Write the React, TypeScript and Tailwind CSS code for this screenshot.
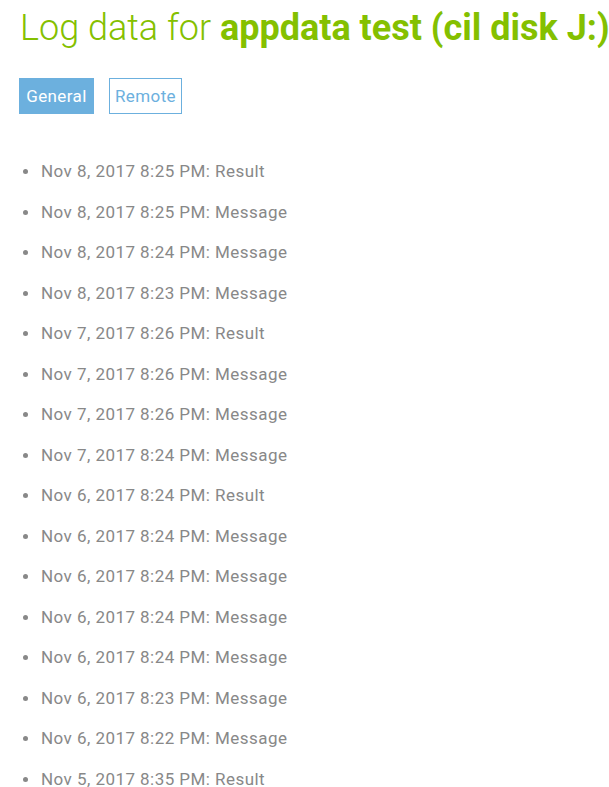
const entries: [string, string][] = [
  ["Nov 8, 2017 8:25 PM", "Result"],
  ["Nov 8, 2017 8:25 PM", "Message"],
  ["Nov 8, 2017 8:24 PM", "Message"],
  ["Nov 8, 2017 8:23 PM", "Message"],
  ["Nov 7, 2017 8:26 PM", "Result"],
  ["Nov 7, 2017 8:26 PM", "Message"],
  ["Nov 7, 2017 8:26 PM", "Message"],
  ["Nov 7, 2017 8:24 PM", "Message"],
  ["Nov 6, 2017 8:24 PM", "Result"],
  ["Nov 6, 2017 8:24 PM", "Message"],
  ["Nov 6, 2017 8:24 PM", "Message"],
  ["Nov 6, 2017 8:24 PM", "Message"],
  ["Nov 6, 2017 8:24 PM", "Message"],
  ["Nov 6, 2017 8:23 PM", "Message"],
  ["Nov 6, 2017 8:22 PM", "Message"],
  ["Nov 5, 2017 8:35 PM", "Result"],
];

export default function App() {
  return (
    <div className="min-h-screen overflow-hidden bg-white pl-[20px] font-['Roboto',sans-serif]">
      <h1 className="whitespace-nowrap pt-[6px] text-[36px] leading-[44px] text-[#84c000]">
        <span className="font-light">Log data for </span>
        <span className="font-bold">appdata test (cil disk J:)</span>
      </h1>

      <div className="mt-[28px] flex gap-[15px]">
        <button className="-ml-[1px] h-[36px] w-[75px] bg-[#6cb0de] pt-[1px] text-[17px] tracking-[0.4px] text-white">
          General
        </button>
        <button className="h-[36px] w-[73px] border border-[#6cb0de] bg-white pt-[1px] text-[17px] tracking-[0.4px] text-[#6cb0de]">
          Remote
        </button>
      </div>

      <ul className="mt-[45px] flex flex-col gap-[16.5px] pl-[21px] text-[17px] tracking-[0.45px] text-[#888888]">
        {entries.map(([date, kind], i) => (
          <li key={i} className="relative leading-[24px]">
            <span className="absolute -left-[18px] top-[10px] h-[5px] w-[5px] rounded-full bg-[#888888]" />
            <a href="#" className="hover:underline">
              {date}: {kind}
            </a>
          </li>
        ))}
      </ul>
    </div>
  );
}
